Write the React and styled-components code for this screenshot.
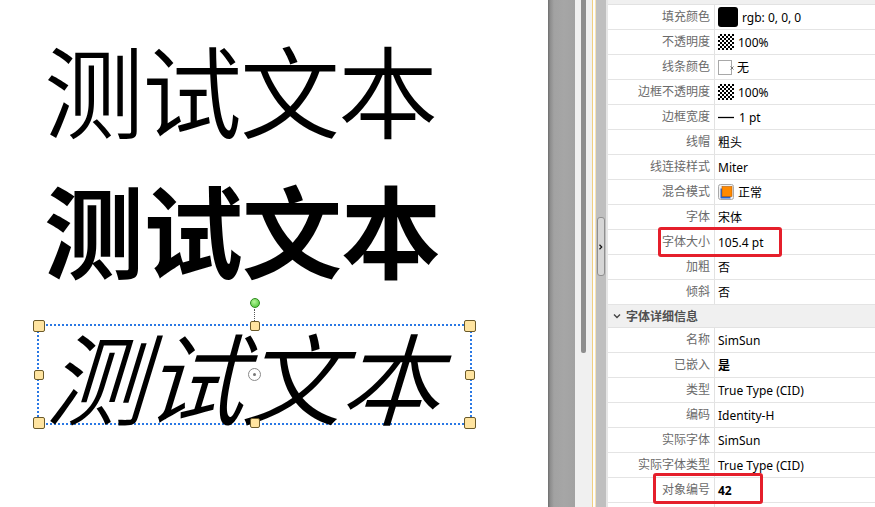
import React from 'react';
import styled, { createGlobalStyle } from 'styled-components';

const GlobalStyle = createGlobalStyle`
  html, body {
    margin: 0;
    padding: 0;
    background: #ffffff;
  }
  body {
    font-family: "Noto Sans", "Noto Sans CJK SC", sans-serif;
  }
`;

const Screen = styled.div`
  display: flex;
  width: 875px;
  height: 507px;
  overflow: hidden;
`;

/* ---------- drawing canvas ---------- */

const Canvas = styled.div`
  width: 548px;
  flex-shrink: 0;
  background: #ffffff;
  display: flex;
  flex-direction: column;
  padding-top: 38px;
  box-sizing: border-box;
`;

const BigText = styled.div`
  font-family: "Noto Sans CJK SC", sans-serif;
  font-size: 100px;
  line-height: 100px;
  height: 100px;
  color: #000;
  white-space: nowrap;
  font-weight: ${(p) => (p.$bold ? 700 : 350)};
  margin-left: ${(p) => p.$left}px;
  margin-top: ${(p) => p.$top}px;
  letter-spacing: ${(p) => (p.$bold ? '-1px' : '-2px')};
`;

const Selection = styled.div`
  position: relative;
  margin-left: 37px;
  margin-top: 46px;
  width: 435px;
  height: 101px;
  box-sizing: border-box;
  border: 2px dotted #2a78e4;
`;

const ItalicText = styled.div`
  font-family: "Noto Sans CJK SC", sans-serif;
  font-size: 100px;
  line-height: 100px;
  font-weight: 350;
  white-space: nowrap;
  letter-spacing: -2px;
  transform: skewX(-17deg);
  transform-origin: 0 70%;
  padding-left: 13px;
  margin-top: -1px;
`;

const Handle = styled.span`
  position: absolute;
  width: ${(p) => (p.$corner ? 10 : 8)}px;
  height: ${(p) => (p.$corner ? 10 : 8)}px;
  margin-left: ${(p) => (p.$corner ? -6 : -5)}px;
  margin-top: ${(p) => (p.$corner ? -6 : -5)}px;
  background: #ffe4a0;
  border: 1px solid #6b5a2a;
  border-radius: 2px;
  left: ${(p) => p.$x};
  top: ${(p) => p.$y};
`;

const Rotator = styled.span`
  position: absolute;
  left: 50%;
  top: -28px;
  width: 10px;
  height: 10px;
  margin-left: -5px;
  border-radius: 50%;
  background: radial-gradient(circle at 40% 35%, #b6f59a, #3fbf2a);
  border: 1px solid #2c8a1c;
  box-sizing: border-box;

  &::after {
    content: '';
    position: absolute;
    left: 3.5px;
    top: 10px;
    height: 12px;
    border-left: 1px dotted #555;
  }
`;

const CenterMark = styled.span`
  position: absolute;
  left: 50%;
  top: 50%;
  width: 13px;
  height: 13px;
  margin-left: -7px;
  margin-top: -7px;
  border-radius: 50%;
  border: 1px solid #8a8a8a;
  box-sizing: border-box;
  display: flex;
  align-items: center;
  justify-content: center;

  &::after {
    content: '';
    width: 3px;
    height: 3px;
    border-radius: 50%;
    background: #777;
  }
`;

/* ---------- splitter ---------- */

const Splitter = styled.div`
  width: 60px;
  flex-shrink: 0;
  display: flex;
`;

const DarkStrip = styled.div`
  width: 27px;
  background: linear-gradient(to right, #6c6c6c 0, #8c8c8c 2px, #a2a2a2 6px, #a6a6a6 60%, #a2a2a2 100%);
`;

const LightStrip = styled.div`
  width: ${(p) => p.$w}px;
  background: #f0f0f0;
`;

const ScrollTrack = styled.div`
  width: 5px;
  background: #f0f0f0;
  display: flex;
  flex-direction: column;
`;

const ScrollThumb = styled.div`
  height: 353px;
  background: #8e8e8e;
  border-radius: 0 0 2px 2px;
`;

const GoldLines = styled.div`
  width: 4px;
  box-sizing: border-box;
  border-left: 1px solid #f1cf7f;
  border-right: 1px solid #f6e3b4;
  background: #fcfcfc;
`;

const GripColumn = styled.div`
  width: 10px;
  background: #bfbfbf;
  display: flex;
  align-items: center;
  justify-content: center;
  padding-bottom: 14px;
  box-sizing: border-box;
`;

const Grip = styled.div`
  width: 8px;
  height: 59px;
  box-sizing: border-box;
  border: 1px solid #8f8f8f;
  border-radius: 3px;
  background: #d6d6d6;
  display: flex;
  align-items: center;
  justify-content: center;
`;

const EdgeStrip = styled.div`
  width: 2px;
  background: #e6e6e6;
`;

/* ---------- properties panel ---------- */

const Panel = styled.div`
  position: relative;
  flex: 1;
  background: #ffffff;
  font-size: 12px;
  color: #000;
`;

const Stub = styled.div`
  height: 5px;
  box-sizing: border-box;
  background: #f0f0f0;
  border-bottom: 1px solid #e2e2e2;
`;

const Row = styled.div`
  display: grid;
  grid-template-columns: 107px 1fr;
  height: 25px;
  box-sizing: border-box;
  border-bottom: 1px solid #e4e4e4;
`;

const Label = styled.div`
  text-align: right;
  padding-right: 4px;
  border-right: 1px solid #e2e2e2;
  color: #6a6a6a;
  line-height: 24px;
  white-space: nowrap;
`;

const Value = styled.div`
  display: flex;
  align-items: center;
  gap: ${(p) => p.$gap ?? 4}px;
  padding-left: 3px;
  white-space: nowrap;
  font-weight: ${(p) => (p.$bold ? 700 : 400)};
`;

const SectionHeader = styled.div`
  height: 23px;
  box-sizing: border-box;
  background: #f0f0f0;
  border-bottom: 1px solid #e2e2e2;
  display: flex;
  align-items: center;
  gap: 5px;
  padding-left: 5px;
  font-weight: 700;
  color: #505050;
`;

const ColorSwatch = styled.span`
  width: 20px;
  height: 20px;
  border-radius: 3px;
  background: ${(p) => p.$color};
`;

const Checker = styled.span`
  width: 16px;
  height: 16px;
  background: repeating-conic-gradient(#000 0 25%, #fff 0 50%) 0 0 / 4px 4px;
`;

const Highlight = styled.div`
  position: absolute;
  left: ${(p) => p.$left}px;
  top: ${(p) => p.$top}px;
  width: ${(p) => p.$w}px;
  height: ${(p) => p.$h}px;
  box-sizing: border-box;
  border: 3px solid #e51f2b;
  border-radius: 3px;
`;

const NoColorIcon = () => (
  <svg width="17" height="17" viewBox="0 0 17 17">
    <rect x="0.5" y="1.5" width="13" height="14" fill="#fff" stroke="#a8a8a8" />
    <path d="M12.5 7.5 l3 3 M15.5 7.5 l-3 3" stroke="#777" strokeWidth="1" />
  </svg>
);

const LineIcon = () => (
  <svg width="17" height="10" viewBox="0 0 17 10">
    <path d="M0 5.5 H16" stroke="#000" strokeWidth="1.3" />
  </svg>
);

const BlendIcon = () => (
  <svg width="16" height="16" viewBox="0 0 16 16">
    <rect x="0.5" y="0.5" width="15" height="15" rx="2" fill="#f2f2f2" stroke="#a9a9a9" />
    <rect x="2.5" y="4.5" width="10" height="10" fill="#1f63d6" />
    <rect x="4" y="2.5" width="10" height="10" fill="#ff8a00" stroke="#b85c00" strokeWidth="0.6" />
  </svg>
);

const Chevron = ({ dir }) => (
  <svg width="8" height="8" viewBox="0 0 8 8">
    {dir === 'down' ? (
      <path d="M1 2.5 L4 5.5 L7 2.5" fill="none" stroke="#444" strokeWidth="1.4" />
    ) : (
      <path d="M2 1 L5 4 L2 7" fill="none" stroke="#111" strokeWidth="1.6" />
    )}
  </svg>
);

const propsTop = [
  { label: '填充颜色', value: 'rgb: 0, 0, 0', icon: <ColorSwatch $color="#000" /> },
  { label: '不透明度', value: '100%', icon: <Checker /> },
  { label: '线条颜色', value: '无', icon: <NoColorIcon />, gap: 2 },
  { label: '边框不透明度', value: '100%', icon: <Checker /> },
  { label: '边框宽度', value: '1 pt', icon: <LineIcon /> },
  { label: '线帽', value: '粗头' },
  { label: '线连接样式', value: 'Miter' },
  { label: '混合模式', value: '正常', icon: <BlendIcon /> },
  { label: '字体', value: '宋体' },
  { label: '字体大小', value: '105.4 pt' },
  { label: '加粗', value: '否' },
  { label: '倾斜', value: '否' },
];

const propsDetail = [
  { label: '名称', value: 'SimSun' },
  { label: '已嵌入', value: '是', bold: true },
  { label: '类型', value: 'True Type (CID)' },
  { label: '编码', value: 'Identity-H' },
  { label: '实际字体', value: 'SimSun' },
  { label: '实际字体类型', value: 'True Type (CID)' },
  { label: '对象编号', value: '42', bold: true },
  { label: '', value: '' },
];

const PropRow = ({ item }) => (
  <Row>
    <Label>{item.label}</Label>
    <Value $bold={item.bold} $gap={item.gap}>
      {item.icon}
      <span>{item.value}</span>
    </Value>
  </Row>
);

const handles = [
  { x: '0%', y: '0%', corner: true },
  { x: '50%', y: '0%' },
  { x: '100%', y: '0%', corner: true },
  { x: '0%', y: '50%' },
  { x: '100%', y: '50%' },
  { x: '0%', y: '100%', corner: true },
  { x: '50%', y: '100%' },
  { x: '100%', y: '100%', corner: true },
];

export default function App() {
  return (
    <>
      <GlobalStyle />
      <Screen>
        <Canvas>
          <BigText $left={44} $top={0}>测试文本</BigText>
          <BigText $left={44} $top={40} $bold>测试文本</BigText>
          <Selection>
            <ItalicText>测试文本</ItalicText>
            <CenterMark />
            <Rotator />
            {handles.map((h, i) => (
              <Handle key={i} $x={h.x} $y={h.y} $corner={h.corner} />
            ))}
          </Selection>
        </Canvas>

        <Splitter>
          <DarkStrip />
          <LightStrip $w={6} />
          <ScrollTrack>
            <ScrollThumb />
          </ScrollTrack>
          <LightStrip $w={6} />
          <GoldLines />
          <GripColumn>
            <Grip>
              <Chevron dir="right" />
            </Grip>
          </GripColumn>
          <EdgeStrip />
        </Splitter>

        <Panel>
          <Stub />
          {propsTop.map((item) => (
            <PropRow key={item.label} item={item} />
          ))}
          <SectionHeader>
            <Chevron dir="down" />
            <span>字体详细信息</span>
          </SectionHeader>
          {propsDetail.map((item, i) => (
            <PropRow key={i} item={item} />
          ))}
          <Highlight $left={50} $top={227} $w={124} $h={30} />
          <Highlight $left={45} $top={473} $w={110} $h={31} />
        </Panel>
      </Screen>
    </>
  );
}
